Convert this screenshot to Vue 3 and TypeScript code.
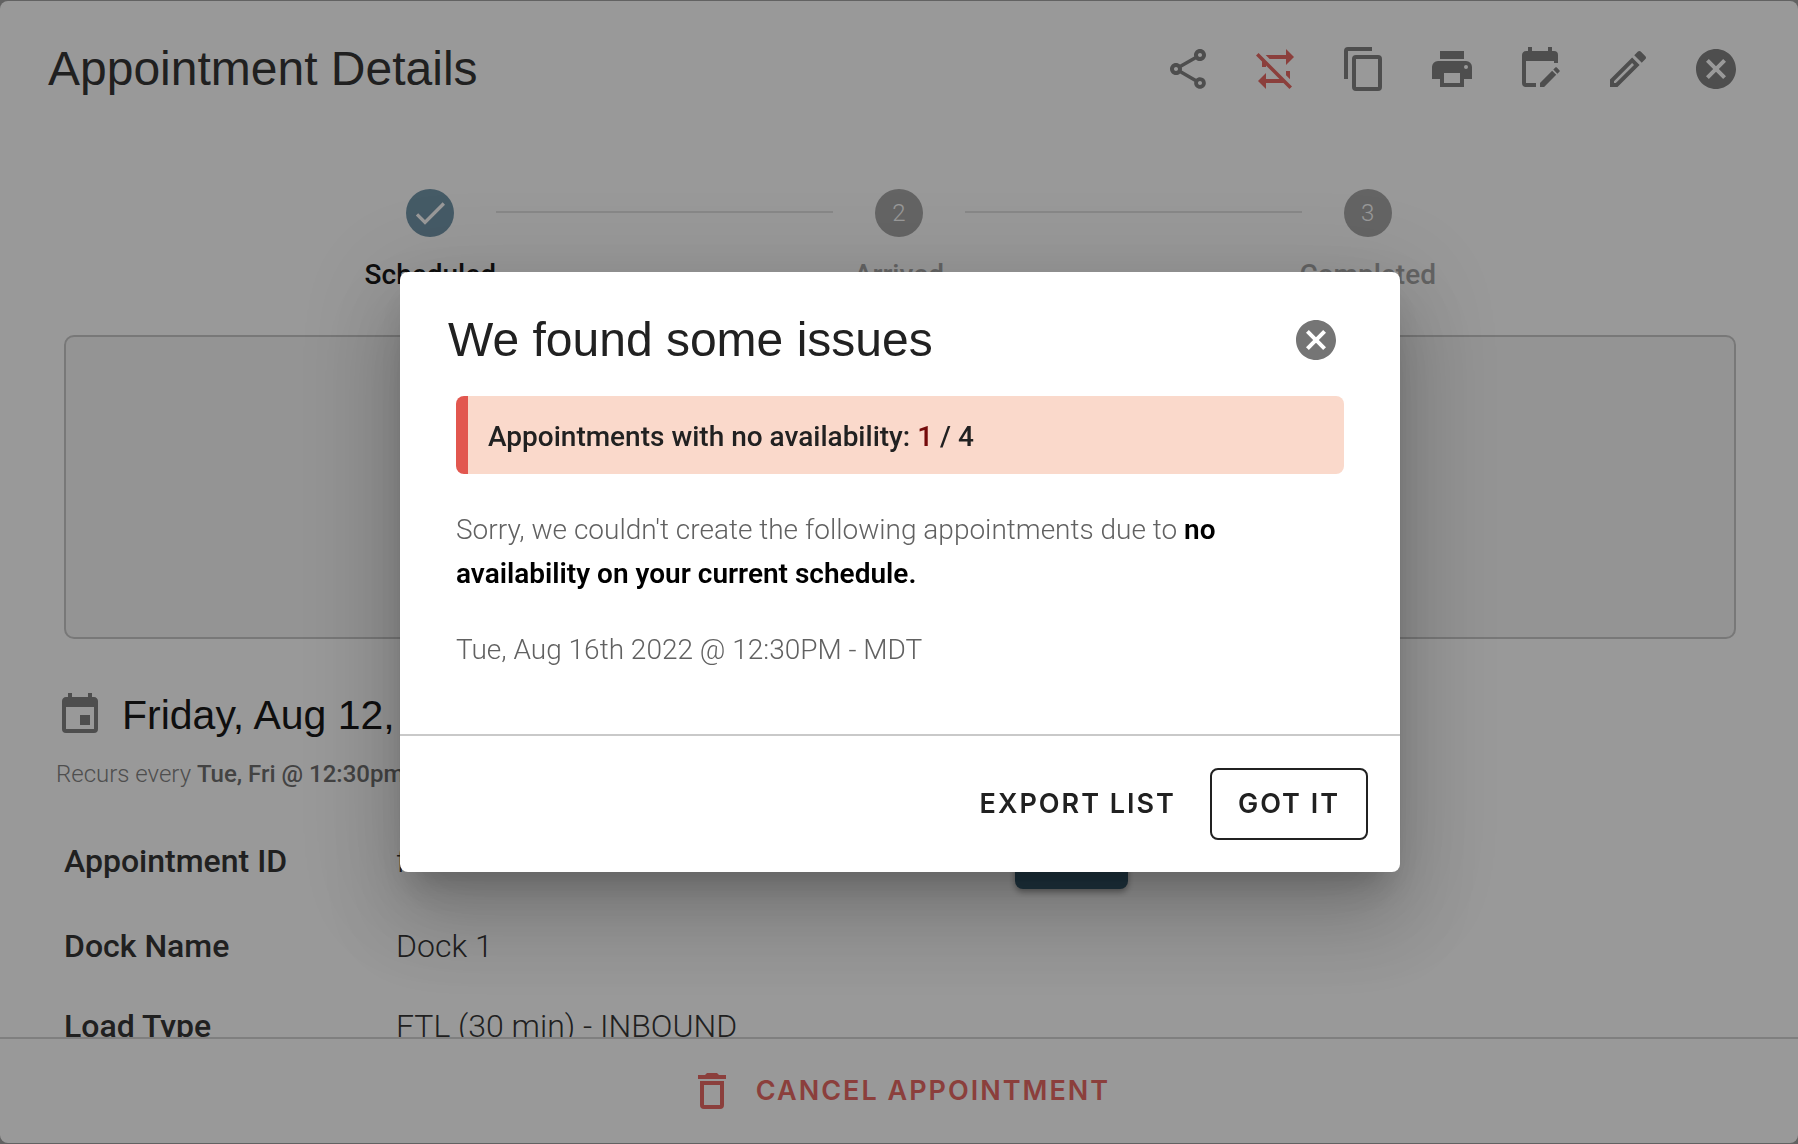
<script setup lang="ts">
interface Action {
  label: string
  path: string
  danger?: boolean
}

interface Step {
  label: string
  done: boolean
}

const closeIcon =
  'M12,2C17.53,2 22,6.47 22,12C22,17.53 17.53,22 12,22C6.47,22 2,17.53 2,12C2,6.47 6.47,2 12,2M15.59,7L12,10.59L8.41,7L7,8.41L10.59,12L7,15.59L8.41,17L12,13.41L15.59,17L17,15.59L13.41,12L17,8.41L15.59,7Z'

const actions: Action[] = [
  {
    label: 'Share',
    path: 'M18 16.08c-.76 0-1.44.3-1.96.77L8.91 12.7c.05-.23.09-.46.09-.7s-.04-.47-.09-.7l7.05-4.11c.54.5 1.25.81 2.04.81 1.66 0 3-1.34 3-3s-1.34-3-3-3-3 1.34-3 3c0 .24.04.47.09.7L8.04 9.81C7.5 9.31 6.79 9 6 9c-1.66 0-3 1.34-3 3s1.34 3 3 3c.79 0 1.5-.31 2.04-.81l7.12 4.15c-.05.21-.08.43-.08.66 0 1.61 1.31 2.91 2.92 2.91s2.92-1.3 2.92-2.91A2.92 2.92 0 0018 16.08M18 4c.55 0 1 .45 1 1s-.45 1-1 1-1-.45-1-1 .45-1 1-1M6 13c-.55 0-1-.45-1-1s.45-1 1-1 1 .45 1 1-.45 1-1 1m12 7c-.55 0-1-.45-1-1s.45-1 1-1 1 .45 1 1-.45 1-1 1z',
  },
  {
    label: 'Stop recurrence',
    danger: true,
    path: 'M2,5.27L3.28,4L20,20.72L18.73,22L15.73,19H7V22L3,18L7,14V17H13.73L7,10.27V11H5V8.27L2,5.27M17,13H19V17.18L17,15.18V13M17,5V2L21,6L17,10V7H8.82L6.82,5H17Z',
  },
  {
    label: 'Duplicate',
    path: 'M19,21H8V7H19M19,5H8A2,2 0 0,0 6,7V21A2,2 0 0,0 8,23H19A2,2 0 0,0 21,21V7A2,2 0 0,0 19,5M16,1H4A2,2 0 0,0 2,3V17H4V3H16V1Z',
  },
  {
    label: 'Print',
    path: 'M18,3H6V7H18M19,12A1,1 0 0,1 18,11A1,1 0 0,1 19,10A1,1 0 0,1 20,11A1,1 0 0,1 19,12M16,19H8V14H16M19,8H5A3,3 0 0,0 2,11V17H6V21H18V17H22V11A3,3 0 0,0 19,8Z',
  },
  {
    label: 'Reschedule',
    path: 'M19 3h-1V1h-2v2H8V1H6v2H5c-1.11 0-2 .89-2 2v14a2 2 0 0 0 2 2h5v-2H5V8h14v1h2V5a2 2 0 0 0-2-2m2.7 10.35-1 1-2.05-2.05 1-1c.21-.22.55-.22.77 0l1.28 1.28c.22.21.22.55 0 .77M12 18.94l6.06-6.06 2.05 2.05L14.06 21H12v-2.06z',
  },
  {
    label: 'Edit',
    path: 'M14.06,9L15,9.94L5.92,19H5V18.08L14.06,9M17.66,3C17.41,3 17.15,3.1 16.96,3.29L15.13,5.12L18.88,8.87L20.71,7.04C21.1,6.65 21.1,6 20.71,5.63L18.37,3.29C18.17,3.09 17.92,3 17.66,3M14.06,6.19L3,17.25V21H6.75L17.81,9.94L14.06,6.19Z',
  },
  { label: 'Close', path: closeIcon },
]

const steps: Step[] = [
  { label: 'Scheduled', done: true },
  { label: 'Arrived', done: false },
  { label: 'Completed', done: false },
]
</script>

<template>
  <div class="page">
    <main class="sheet">
      <header class="sheet-header">
        <h1 class="title">Appointment Details</h1>
        <div class="actions">
          <button
            v-for="action in actions"
            :key="action.label"
            type="button"
            class="icon-button"
            :class="{ danger: action.danger }"
            :aria-label="action.label"
          >
            <svg class="icon" viewBox="0 0 24 24" fill-rule="evenodd"><path :d="action.path" /></svg>
          </button>
        </div>
      </header>

      <div class="sheet-body">
        <ol class="stepper">
          <li v-for="(step, index) in steps" :key="step.label" class="step" :class="{ done: step.done }">
            <div class="track">
              <span class="line" :class="{ blank: index === 0 }"></span>
              <span class="marker">
                <svg v-if="step.done" class="check" viewBox="0 0 24 24">
                  <path d="M21,7L9,19L3.5,13.5L4.91,12.09L9,16.17L19.59,5.59L21,7Z" />
                </svg>
                <template v-else>{{ index + 1 }}</template>
              </span>
              <span class="line" :class="{ blank: index === steps.length - 1 }"></span>
            </div>
            <span class="step-label">{{ step.label }}</span>
          </li>
        </ol>

        <section class="panel"></section>

        <div class="date-row">
          <svg class="icon" viewBox="0 0 24 24">
            <path d="M19,19H5V8H19M16,1V3H8V1H6V3H5C3.89,3 3,3.89 3,5V19A2,2 0 0,0 5,21H19A2,2 0 0,0 21,19V5C21,3.89 20.1,3 19,3H18V1M17,12H12V17H17V12Z" />
          </svg>
          <h2 class="date">Friday, Aug 12,</h2>
        </div>
        <p class="recurs">Recurs every <strong>Tue, Fri @ 12:30pm</strong></p>

        <dl class="details">
          <div class="row row-id">
            <dt>Appointment ID</dt>
            <dd>
              <span class="id">f</span>
              <button type="button" class="copy" aria-label="Copy"></button>
            </dd>
          </div>
          <div class="row">
            <dt>Dock Name</dt>
            <dd>Dock 1</dd>
          </div>
          <div class="row">
            <dt>Load Type</dt>
            <dd>FTL (30 min) - INBOUND</dd>
          </div>
        </dl>
      </div>

      <footer class="sheet-footer">
        <button type="button" class="text-button cancel">
          <svg class="icon" viewBox="0 0 24 24">
            <path d="M6,19A2,2 0 0,0 8,21H16A2,2 0 0,0 18,19V7H6V19M8,9H16V19H8V9M15.5,4L14.5,3H9.5L8.5,4H5V6H19V4H15.5Z" />
          </svg>
          CANCEL APPOINTMENT
        </button>
      </footer>
    </main>

    <div class="overlay">
      <section class="dialog" role="dialog" aria-modal="true" aria-labelledby="dialog-title">
        <header class="dialog-header">
          <h2 id="dialog-title" class="title">We found some issues</h2>
          <button type="button" class="icon-button" aria-label="Close dialog">
            <svg class="icon" viewBox="0 0 24 24"><path :d="closeIcon" /></svg>
          </button>
        </header>
        <div class="dialog-body">
          <p class="alert">Appointments with no availability: <span class="count">1</span> / 4</p>
          <p class="message">
            Sorry, we couldn't create the following appointments due to
            <strong>no availability on your current schedule.</strong>
          </p>
          <p class="message">Tue, Aug 16th 2022 @ 12:30PM - MDT</p>
        </div>
        <footer class="dialog-footer">
          <button type="button" class="text-button">EXPORT LIST</button>
          <button type="button" class="text-button outlined">GOT IT</button>
        </footer>
      </section>
    </div>
  </div>
</template>

<style>
body {
  margin: 0;
}
</style>

<style scoped>
.page {
  box-sizing: border-box;
  height: 100vh;
  padding: 1px 0;
  background: #999;
  color: #212121;
  font-family: Roboto, "Liberation Sans", sans-serif;
  font-size: 28px;
  line-height: 44px;
}

h1,
h2,
p,
ol,
dl,
dd {
  margin: 0;
  padding: 0;
}

button {
  padding: 0;
  border: 0;
  background: none;
  color: inherit;
  font: inherit;
}

.icon {
  display: block;
  flex: none;
  width: 48px;
  height: 48px;
  fill: currentColor;
}

.sheet {
  display: flex;
  flex-direction: column;
  height: 100%;
  border-radius: 8px;
  background: #fff;
  overflow: hidden;
}

.sheet-header {
  display: flex;
  align-items: center;
  justify-content: space-between;
  flex: none;
  height: 136px;
  padding: 0 58px 0 48px;
}

.title {
  font-family: "Liberation Sans", sans-serif;
  font-size: 48px;
  font-weight: 400;
  line-height: 64px;
}

.actions {
  display: flex;
  gap: 40px;
}

.icon-button {
  color: #757575;
}

.danger {
  color: #e65953;
}

.sheet-body {
  flex: 1;
  min-height: 0;
  overflow: hidden;
}

.stepper {
  display: grid;
  grid-template-columns: repeat(3, 1fr);
  margin: 52px 10.9% 0;
  list-style: none;
}

.step {
  color: #9e9e9e;
  font-weight: 500;
  text-align: center;
}

.step.done {
  color: #000;
}

.track {
  display: flex;
  align-items: center;
  gap: 42px;
}

.line {
  flex: 1;
  height: 2px;
  margin-bottom: 2px;
  background: #e0e0e0;
}

.line.blank {
  background: none;
}

.marker {
  display: flex;
  align-items: center;
  justify-content: center;
  width: 48px;
  height: 48px;
  border-radius: 50%;
  background: #9e9e9e;
  color: #fff;
  font-size: 24px;
  font-weight: 300;
}

.done .marker {
  background: #658ca2;
}

.check {
  width: 40px;
  height: 40px;
  fill: currentColor;
}

.step-label {
  display: block;
  margin-top: 16px;
}

.panel {
  box-sizing: border-box;
  height: 304px;
  margin: 38px 62px 0 64px;
  border: 2px solid #c2c2c2;
  border-radius: 10px;
  background: #f5f5f5;
}

.date-row {
  display: flex;
  align-items: center;
  gap: 18px;
  margin: 52px 56px 0;
  color: #757575;
}

.date {
  color: #000;
  font-family: "Liberation Sans", sans-serif;
  font-size: 41px;
  font-weight: 400;
  line-height: 48px;
}

.recurs {
  margin: 13px 56px 0;
  color: #757575;
  font-size: 24px;
  font-weight: 300;
}

.recurs strong {
  color: #616161;
  font-weight: 500;
}

.details {
  margin: 20px 64px 0;
  font-size: 32px;
  font-weight: 300;
}

.row {
  display: grid;
  grid-template-columns: 332px 1fr;
  align-items: center;
  height: 80px;
}

.row-id {
  height: 90px;
}

dt {
  font-weight: 500;
}

dd {
  display: flex;
  align-items: center;
}

.id {
  width: 619px;
}

.copy {
  width: 113px;
  height: 56px;
  border-radius: 8px;
  background: #20485e;
  box-shadow: 0 3px 6px rgba(0, 0, 0, 0.4);
}

.sheet-footer {
  display: flex;
  align-items: center;
  justify-content: center;
  flex: none;
  height: 104px;
  border-top: 2px solid #d0d0d0;
}

.text-button {
  font-family: Inter, "Liberation Sans", sans-serif;
  font-size: 27px;
  font-weight: 600;
  letter-spacing: 2px;
}

.cancel {
  display: flex;
  align-items: center;
  gap: 20px;
  color: #e65953;
}

.overlay {
  position: fixed;
  inset: 0;
  display: flex;
  align-items: center;
  justify-content: center;
  padding-left: 2px;
  background: rgba(33, 33, 33, 0.46);
}

.dialog {
  width: 1000px;
  max-width: 90%;
  border-radius: 8px;
  background: #fff;
  box-shadow:
    0 22px 30px -14px rgba(0, 0, 0, 0.2),
    0 48px 76px 6px rgba(0, 0, 0, 0.14),
    0 18px 92px 16px rgba(0, 0, 0, 0.12);
}

.dialog-header {
  display: flex;
  align-items: center;
  justify-content: space-between;
  padding: 36px 60px 24px 48px;
}

.dialog-body {
  padding: 0 56px 62px;
}

.alert {
  padding: 19px 20px 15px;
  border-left: 12px solid #e2574f;
  border-radius: 8px;
  background: #fad9cb;
  font-weight: 500;
}

.count {
  color: #740b0b;
}

.message {
  margin-top: 32px;
  color: #616161;
  font-weight: 300;
}

.alert + .message {
  margin-top: 34px;
}

.message strong {
  color: #000;
  font-weight: 600;
}

.dialog-footer {
  display: flex;
  justify-content: flex-end;
  gap: 8px;
  padding: 32px;
  border-top: 2px solid #c9c9c9;
}

.dialog-footer .text-button {
  height: 72px;
  padding: 0 26px;
}

.dialog-footer .outlined {
  border: 2px solid #212121;
  border-radius: 8px;
}
</style>
